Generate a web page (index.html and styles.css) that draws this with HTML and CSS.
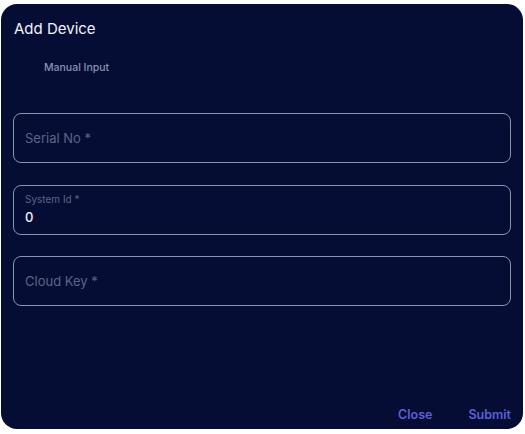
FILE: index.html
```html
<!DOCTYPE html>
<html>
<head>
<meta charset="utf-8">
<link rel="stylesheet" href="styles.css">
</head>
<body>
<div class="dialog">
  <h2 class="title">Add Device</h2>
  <div class="tab">Manual Input</div>
  <div class="fields">
    <div class="field"><span class="placeholder">Serial No *</span></div>
    <div class="field filled"><span class="label">System Id *</span><span class="value">0</span></div>
    <div class="field"><span class="placeholder">Cloud Key *</span></div>
  </div>
  <div class="actions">
    <button class="btn">Close</button>
    <button class="btn">Submit</button>
  </div>
</div>
</body>
</html>
```
FILE: styles.css
```css
html, body { margin: 0; padding: 0; background: #ffffff; }
body { font-family: Inter, "Noto Sans", sans-serif; }
.dialog {
  box-sizing: border-box;
  margin: 4px 0 0 1px;
  width: 522px;
  height: 425px;
  background: #060d35;
  border-radius: 16px;
  padding: 15px 12px 0 12px;
  display: flex;
  flex-direction: column;
}
.title {
  margin: 0 0 0 1px;
  font-size: 15px;
  line-height: 20px;
  font-weight: 400;
  color: #f2f3f8;
}
.tab {
  margin: 22px 0 0 31px;
  font-size: 10.5px;
  line-height: 14px;
  font-weight: 500;
  color: #8a90b3;
}
.fields {
  margin-top: 38px;
  display: flex;
  flex-direction: column;
  gap: 21.5px;
}
.field {
  box-sizing: border-box;
  height: 50px;
  border: 1.5px solid #8d92b2;
  border-radius: 8px;
  padding: 0 11px;
  display: flex;
  flex-direction: column;
  justify-content: center;
}
.placeholder {
  font-size: 13px;
  color: #5d6386;
}
.filled { justify-content: flex-start; padding-top: 7px; }
.label {
  font-size: 10px;
  line-height: 13px;
  color: #5d6386;
}
.value {
  margin-top: 3px;
  font-size: 13px;
  line-height: 16px;
  font-weight: 500;
  color: #f2f3f8;
}
.actions {
  margin-top: auto;
  display: flex;
  justify-content: flex-end;
  gap: 36px;
  padding: 0 0 6px 0;
}
.btn {
  background: none;
  border: none;
  padding: 0;
  font-family: Inter, "Noto Sans", sans-serif;
  font-size: 12.5px;
  line-height: 16px;
  font-weight: 600;
  color: #5b5fd8;
}
```
